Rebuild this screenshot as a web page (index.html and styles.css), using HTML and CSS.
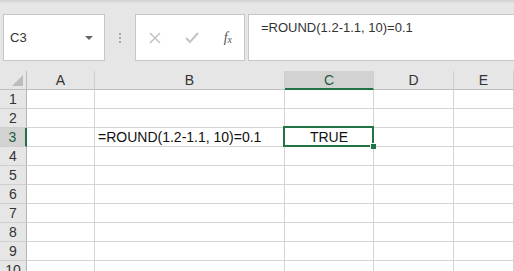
FILE: index.html
```html
<!DOCTYPE html>
<html lang="en">
<head>
  <meta charset="UTF-8">
  <title>Sheet</title>
  <link rel="stylesheet" href="styles.css">
</head>
<body>
  <div class="topStrip"></div>

  <!-- Formula bar -->
  <div class="formulaBar">
    <div class="nameBox">
      <span>C3</span>
      <span class="arrow"></span>
    </div>
    <div class="grip"><i></i><i></i><i></i></div>
    <div class="buttons">
      <svg width="12" height="12" viewBox="0 0 12 12"><path d="M1 1 L11 11 M11 1 L1 11" stroke="#c4c4c4" stroke-width="1.6" fill="none"/></svg>
      <svg width="14" height="12" viewBox="0 0 14 12"><path d="M1 6 L5 10 L13 1" stroke="#c4c4c4" stroke-width="2" fill="none"/></svg>
      <span class="fx">f<sub>x</sub></span>
    </div>
    <div class="formulaInput">=ROUND(1.2-1.1, 10)=0.1</div>
  </div>

  <!-- Grid -->
  <div class="sheet">
    <div class="hd corner"><span class="tri"></span></div>
    <div class="hd col">A</div>
    <div class="hd col">B</div>
    <div class="hd col active">C</div>
    <div class="hd col">D</div>
    <div class="hd col">E</div>

    <div class="hd row">1</div><div class="c"></div><div class="c"></div><div class="c"></div><div class="c"></div><div class="c"></div>
    <div class="hd row">2</div><div class="c"></div><div class="c"></div><div class="c"></div><div class="c"></div><div class="c"></div>
    <div class="hd row active">3</div><div class="c"></div><div class="c">=ROUND(1.2-1.1, 10)=0.1</div><div class="c center selected">TRUE<span class="sel"><span class="handle"></span></span></div><div class="c"></div><div class="c"></div>
    <div class="hd row">4</div><div class="c"></div><div class="c"></div><div class="c"></div><div class="c"></div><div class="c"></div>
    <div class="hd row">5</div><div class="c"></div><div class="c"></div><div class="c"></div><div class="c"></div><div class="c"></div>
    <div class="hd row">6</div><div class="c"></div><div class="c"></div><div class="c"></div><div class="c"></div><div class="c"></div>
    <div class="hd row">7</div><div class="c"></div><div class="c"></div><div class="c"></div><div class="c"></div><div class="c"></div>
    <div class="hd row">8</div><div class="c"></div><div class="c"></div><div class="c"></div><div class="c"></div><div class="c"></div>
    <div class="hd row">9</div><div class="c"></div><div class="c"></div><div class="c"></div><div class="c"></div><div class="c"></div>
    <div class="hd row">10</div><div class="c"></div><div class="c"></div><div class="c"></div><div class="c"></div><div class="c"></div>
  </div>
</body>
</html>
```

FILE: styles.css
```css
body {
  margin: 0;
  padding: 0;
  background-color: #e6e6e6;
  font-family: "Liberation Sans", Arial, sans-serif;
  color: #222222;
  overflow: hidden;
}
.topStrip {
  height: 4px;
  background: linear-gradient(#d2d2d2, #e6e6e6);
}
.formulaBar {
  display: flex;
  align-items: stretch;
  height: 47px;
  margin-top: 10px;
  padding-left: 3px;
}
.nameBox {
  width: 102px;
  background-color: #ffffff;
  border: 1px solid #c6c6c6;
  display: flex;
  align-items: center;
  justify-content: space-between;
  padding: 0 11px 0 6px;
  box-sizing: border-box;
  font-size: 13px;
  color: #333333;
}
.arrow {
  width: 0;
  height: 0;
  border-left: 4px solid transparent;
  border-right: 4px solid transparent;
  border-top: 4px solid #666666;
}
.grip {
  width: 30px;
  display: flex;
  flex-direction: column;
  align-items: center;
  justify-content: center;
  gap: 2px;
}
.grip i {
  width: 2px;
  height: 2px;
  background-color: #a8a8a8;
}
.buttons {
  width: 110px;
  background-color: #ffffff;
  border: 1px solid #c6c6c6;
  box-sizing: border-box;
  display: flex;
  align-items: center;
  justify-content: space-between;
  padding: 0 12px 0 13px;
}
.fx {
  font-family: "Liberation Serif", serif;
  font-style: italic;
  font-size: 14px;
  color: #555555;
}
.fx sub {
  font-size: 10px;
  vertical-align: -1px;
}
.formulaInput {
  flex: 1;
  margin-left: 3px;
  background-color: #ffffff;
  border: 1px solid #c6c6c6;
  border-right: none;
  padding: 5px 0 0 12px;
  font-size: 13px;
  color: #333333;
}
.sheet {
  display: grid;
  grid-template-columns: 27px 68px 190px 89px 80px 1fr;
  grid-auto-rows: 19px;
  margin-top: 10px;
  background-color: #ffffff;
}
.hd {
  background-color: #e6e6e6;
  font-size: 14px;
  color: #333333;
  display: flex;
  align-items: center;
  justify-content: center;
  box-sizing: border-box;
}
.col {
  border-right: 1px solid #cfcfcf;
  border-bottom: 1px solid #bdbdbd;
}
.col.active {
  background-color: #d2d2d2;
  border-bottom: 2px solid #217346;
  color: #1e5e3a;
}
.corner {
  border-right: 1px solid #bdbdbd;
  border-bottom: 1px solid #bdbdbd;
  position: relative;
}
.tri {
  position: absolute;
  right: 3px;
  bottom: 3px;
  width: 0;
  height: 0;
  border-left: 11px solid transparent;
  border-bottom: 11px solid #bcbcbc;
}
.row {
  border-right: 1px solid #b4b4b4;
  border-bottom: 1px solid #cfcfcf;
}
.row.active {
  background-color: #d2d2d2;
  border-right: 2px solid #217346;
  color: #1e5e3a;
}
.c {
  border-right: 1px solid #d4d4d4;
  border-bottom: 1px solid #d4d4d4;
  box-sizing: border-box;
  font-size: 14px;
  line-height: 18px;
  padding-left: 3px;
  white-space: nowrap;
  color: #111111;
}
.c.center {
  text-align: center;
  padding-left: 0;
}
.selected {
  position: relative;
}
.sel {
  position: absolute;
  left: -2px;
  top: -2px;
  right: -1px;
  bottom: -1px;
  border: 2px solid #217346;
}
.handle {
  position: absolute;
  right: -4px;
  bottom: -4px;
  width: 5px;
  height: 5px;
  background-color: #217346;
  border: 1px solid #ffffff;
  border-right: none;
  border-bottom: none;
}
```
